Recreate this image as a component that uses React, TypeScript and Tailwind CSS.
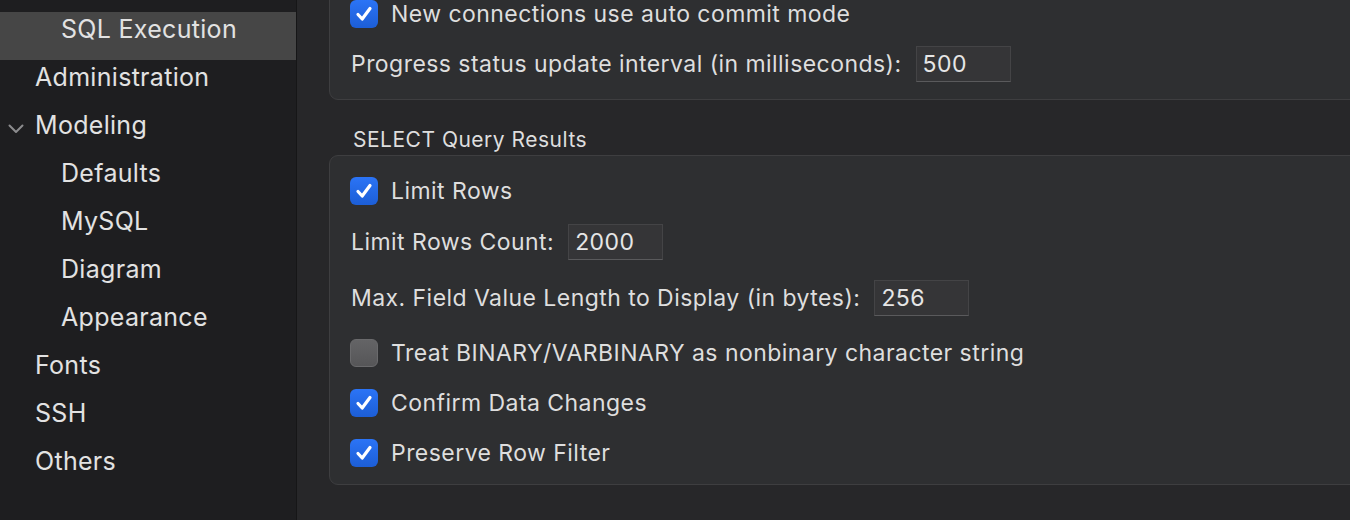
import React from 'react';

const font = { fontFamily: 'Inter, "Noto Sans", sans-serif' };

function Check({ on }: { on: boolean }) {
  if (!on) {
    return (
      <div className="w-[28px] h-[28px] rounded-[6px] bg-gradient-to-b from-[#646466] to-[#565658] border border-[#6a6a6c] shrink-0" />
    );
  }
  return (
    <div className="w-[28px] h-[28px] rounded-[6px] bg-gradient-to-b from-[#2b74f6] to-[#1c5ed6] flex items-center justify-center shrink-0">
      <svg width="20" height="20" viewBox="0 0 20 20" fill="none">
        <path d="M4 10.5 L8.2 15 L16 4.5" stroke="white" strokeWidth="3.2" strokeLinecap="round" strokeLinejoin="round" />
      </svg>
    </div>
  );
}

function CheckRow({ on, label }: { on: boolean; label: string }) {
  return (
    <div className="flex items-center h-[28px] gap-[13px]">
      <Check on={on} />
      <span className="text-[23px] tracking-[0.45px] text-[#dedede] whitespace-nowrap">{label}</span>
    </div>
  );
}

function InputRow({ label, value }: { label: string; value: string }) {
  return (
    <div className="flex items-center h-[36px] gap-[14px]">
      <span className="text-[23px] tracking-[0.45px] text-[#dedede] whitespace-nowrap pl-[1px]">{label}</span>
      <div className="w-[95px] h-[36px] bg-[#353537] border border-[#444446] border-b-[#5a5a5c] flex items-center pl-[6px] text-[23px] tracking-[0.45px] text-[#e6e6e6]">
        {value}
      </div>
    </div>
  );
}

const navItems: { label: string; indent: boolean; selected?: boolean; chevron?: boolean }[] = [
  { label: 'SQL Execution', indent: true, selected: true },
  { label: 'Administration', indent: false },
  { label: 'Modeling', indent: false, chevron: true },
  { label: 'Defaults', indent: true },
  { label: 'MySQL', indent: true },
  { label: 'Diagram', indent: true },
  { label: 'Appearance', indent: true },
  { label: 'Fonts', indent: false },
  { label: 'SSH', indent: false },
  { label: 'Others', indent: false },
];

export default function App() {
  return (
    <div className="w-[1350px] h-[520px] flex overflow-hidden bg-[#272729]" style={font}>
      <aside className="w-[297px] shrink-0 bg-[#1e1e20] border-r border-[#161617] pt-[12px]">
        {navItems.map((item) => (
          <div
            key={item.label}
            className={`h-[48px] flex items-start relative ${item.selected ? 'bg-[#464646]' : ''}`}
          >
            {item.chevron && (
              <svg className="absolute left-[8px] top-[16px]" width="16" height="10" viewBox="0 0 16 10" fill="none">
                <path d="M1.5 1.5 L8 8 L14.5 1.5" stroke="#8c8c8e" strokeWidth="2" strokeLinecap="round" strokeLinejoin="round" />
              </svg>
            )}
            <span
              className={`leading-[34px] text-[25px] tracking-[0.3px] text-[#e2e2e2] whitespace-nowrap ${item.indent ? 'pl-[61px]' : 'pl-[35px]'}`}
            >
              {item.label}
            </span>
          </div>
        ))}
      </aside>

      <main className="flex-1 pl-[32px] overflow-hidden">
        <div className="w-[1060px] mt-[-30px] h-[130px] bg-[#2e2f31] border border-[#3e3e40] rounded-[9px] pt-[29px] pl-[20px] flex flex-col">
          <CheckRow on label="New connections use auto commit mode" />
          <div className="mt-[18px]">
            <InputRow label="Progress status update interval (in milliseconds):" value="500" />
          </div>
        </div>

        <div className="mt-[30px] h-[20px] pl-[24px] flex items-center text-[21px] tracking-[0.5px] text-[#dedede] whitespace-nowrap">
          SELECT Query Results
        </div>

        <div className="mt-[5px] w-[1060px] h-[330px] bg-[#2e2f31] border border-[#3e3e40] rounded-[9px] pt-[21px] pl-[20px] flex flex-col">
          <CheckRow on label="Limit Rows" />
          <div className="mt-[19px]">
            <InputRow label="Limit Rows Count:" value="2000" />
          </div>
          <div className="mt-[20px]">
            <InputRow label="Max. Field Value Length to Display (in bytes):" value="256" />
          </div>
          <div className="mt-[23px]">
            <CheckRow on={false} label="Treat BINARY/VARBINARY as nonbinary character string" />
          </div>
          <div className="mt-[22px]">
            <CheckRow on label="Confirm Data Changes" />
          </div>
          <div className="mt-[22px]">
            <CheckRow on label="Preserve Row Filter" />
          </div>
        </div>
      </main>
    </div>
  );
}
